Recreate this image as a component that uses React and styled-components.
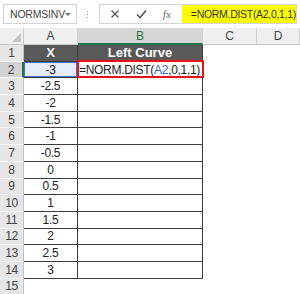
import React from 'react';
import styled, { createGlobalStyle } from 'styled-components';

const Global = createGlobalStyle`
    html, body {
        margin: 0;
        padding: 0;
        background: #fff;
        overflow: hidden;
    }
    body {
        font-family: "Liberation Sans", Arial, sans-serif;
        color: #222;
    }
`

const Page = styled.div`
    width: 300px;
    height: 294px;
    overflow: hidden;
    background: #fff;
`

const Toolbar = styled.div`
    display: flex;
    align-items: center;
    height: 28px;
    padding: 0 3px;
    box-sizing: border-box;
`

const NameBox = styled.div`
    display: flex;
    align-items: center;
    justify-content: space-between;
    width: 74px;
    height: 20px;
    box-sizing: border-box;
    border: 1px solid #d4d4d4;
    padding: 0 5px 0 6px;
    font-size: 10.5px;
    letter-spacing: -0.2px;
    color: #444;
`

const Caret = styled.span`
    width: 0;
    height: 0;
    border-left: 3px solid transparent;
    border-right: 3px solid transparent;
    border-top: 3px solid #777;
`

const Grip = styled.div`
    display: flex;
    flex-direction: column;
    justify-content: center;
    gap: 2px;
    width: 22px;
    align-items: center;
    span {
        width: 1px;
        height: 1px;
        background: #999;
    }
`

const FormulaBar = styled.div`
    display: flex;
    flex: 1;
    height: 20px;
    box-sizing: border-box;
    border: 1px solid #d4d4d4;
`

const Buttons = styled.div`
    display: flex;
    align-items: center;
    width: 82px;
    padding-left: 10px;
    gap: 16px;
    color: #555;
    box-sizing: border-box;
`

const Fx = styled.span`
    font-family: "Liberation Serif", serif;
    font-style: italic;
    font-size: 11px;
    color: #666;
`

const FormulaInput = styled.div`
    flex: 1;
    background: #ffff00;
    display: flex;
    align-items: center;
    padding-left: 9px;
    font-size: 10.5px;
    letter-spacing: -0.3px;
    color: #333;
    white-space: nowrap;
`

const Sheet = styled.div`
    display: grid;
    grid-template-columns: 24px 54px 125px 54px 1fr;
    grid-template-rows: 17px repeat(15, 16.7px);
`

const Corner = styled.div`
    position: relative;
    background: #efefef;
    border-right: 1px solid #c8c8c8;
    border-bottom: 1px solid #c8c8c8;
    &::after {
        content: '';
        position: absolute;
        right: 2px;
        bottom: 2px;
        border-left: 9px solid transparent;
        border-bottom: 9px solid #c6c6c6;
    }
`

const ColHead = styled.div`
    display: flex;
    align-items: center;
    justify-content: center;
    background: ${p => (p.$active ? '#d6d6d6' : '#efefef')};
    color: ${p => (p.$active ? '#217346' : '#444')};
    border-right: 1px solid #d0d0d0;
    border-bottom: ${p => (p.$active ? '2px solid #217346' : '1px solid #c8c8c8')};
    font-size: 12px;
    box-sizing: border-box;
`

const RowHead = styled.div`
    display: flex;
    align-items: center;
    justify-content: center;
    background: ${p => (p.$active ? '#d2d2d2' : '#e6e6e6')};
    border-bottom: 1px solid #f4f4f4;
    border-right: ${p => (p.$active ? '2px solid #217346' : '1px solid #c0c0c0')};
    color: #444;
    font-size: 12px;
    letter-spacing: -0.3px;
    box-sizing: border-box;
`

const Cell = styled.div`
    display: flex;
    align-items: center;
    justify-content: ${p => (p.$left ? 'flex-start' : 'center')};
    box-sizing: border-box;
    font-size: 12px;
    letter-spacing: -0.3px;
    color: #222;
    white-space: nowrap;
    ${p => p.$boxed && `
        border-right: 1px solid #3c3c3c;
        border-bottom: 1px solid #3c3c3c;
    `}
`

const HeadCell = styled(Cell)`
    background: #595959;
    color: #fff;
    font-weight: bold;
    font-size: 13px;
    letter-spacing: 0;
`

const RefCell = styled(Cell)`
    background: #e6ecf7;
    box-shadow: inset 0 0 0 1px #4472c4;
`

const EditCell = styled(Cell)`
    position: relative;
    padding-left: 1px;
    &::after {
        content: '';
        position: absolute;
        inset: -2px -2px -1px -1px;
        border: 2px solid #e8101a;
    }
`

const Ref = styled.span`
    color: #3866c0;
`

const values = ['-2.5', '-2', '-1.5', '-1', '-0.5', '0', '0.5', '1', '1.5', '2', '2.5', '3']

const Blank = () => (
    <>
        <Cell />
        <Cell />
    </>
)

const App = () => {
    return (
        <Page>
            <Global />
            <Toolbar>
                <NameBox>
                    NORMSINV
                    <Caret />
                </NameBox>
                <Grip>
                    <span /><span /><span />
                </Grip>
                <FormulaBar>
                    <Buttons>
                        <svg width="10" height="10" viewBox="0 0 10 10">
                            <path d="M1.5 1.5l7 7M8.5 1.5l-7 7" stroke="#555" strokeWidth="1.3" />
                        </svg>
                        <svg width="11" height="10" viewBox="0 0 11 10">
                            <path d="M1 5.5l3 3L10 1.5" stroke="#555" strokeWidth="1.6" fill="none" />
                        </svg>
                        <Fx>fx</Fx>
                    </Buttons>
                    <FormulaInput>=NORM.DIST(A2,0,1,1)</FormulaInput>
                </FormulaBar>
            </Toolbar>
            <Sheet>
                <Corner />
                <ColHead>A</ColHead>
                <ColHead $active>B</ColHead>
                <ColHead>C</ColHead>
                <ColHead>D</ColHead>

                <RowHead>1</RowHead>
                <HeadCell $boxed>X</HeadCell>
                <HeadCell $boxed>Left Curve</HeadCell>
                <Blank />

                <RowHead $active>2</RowHead>
                <RefCell $boxed>-3</RefCell>
                <EditCell $boxed $left>
                    =NORM.DIST(<Ref>A2</Ref>,0,1,1)
                </EditCell>
                <Blank />

                {values.map((v, i) => (
                    <React.Fragment key={v}>
                        <RowHead>{i + 3}</RowHead>
                        <Cell $boxed>{v}</Cell>
                        <Cell $boxed />
                        <Blank />
                    </React.Fragment>
                ))}

                <RowHead>15</RowHead>
                <Cell />
                <Cell />
                <Blank />
            </Sheet>
        </Page>
    )
}

export default App;
